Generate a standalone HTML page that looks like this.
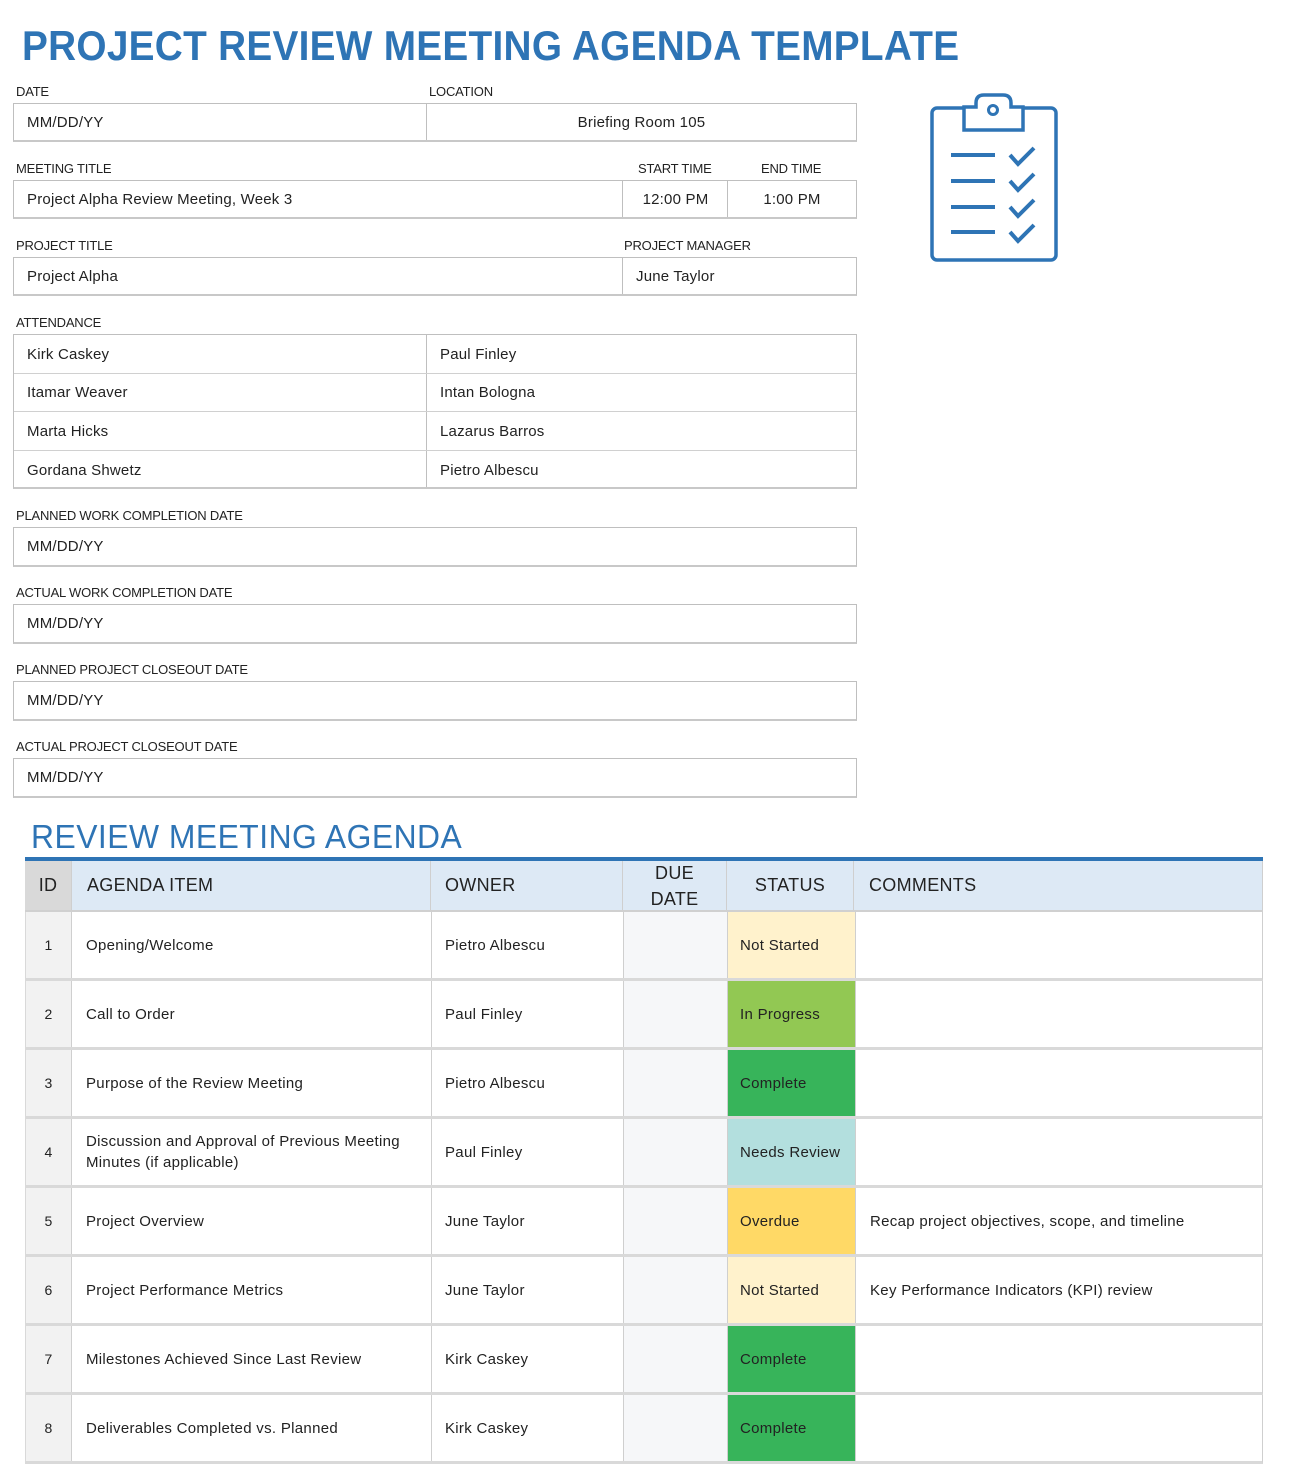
<!DOCTYPE html>
<html><head><meta charset="utf-8"><style>
*{margin:0;padding:0;box-sizing:border-box}
body{width:1300px;height:1477px;background:#fff;font-family:"Liberation Sans",sans-serif;color:#222;position:relative;overflow:hidden}
.a{position:absolute}
.lbl{position:absolute;font-size:13px;color:#222;letter-spacing:-0.2px}
.box{position:absolute;border:1px solid #bfbfbf;border-bottom:2px solid #c8c8c8;background:#fff}
.c{position:absolute;top:0;bottom:0;display:flex;align-items:center;font-size:15px;padding-left:13px;letter-spacing:0.2px}
.vl{position:absolute;top:0;bottom:0;width:1px;background:#bfbfbf}
.hl{position:absolute;left:0;right:0;height:1px;background:#d0d0d0}
.t{position:absolute;left:25px;width:1238px}
.cell{position:absolute;top:0;bottom:0;display:flex;align-items:center;font-size:15px;letter-spacing:0.3px;border-right:1px solid #cfcfcf}
</style></head><body>
<div class="a" style="left:22px;top:22px;font-size:42px;font-weight:bold;color:#2e74b5;letter-spacing:0.3px;transform:scaleX(0.923);transform-origin:left">PROJECT REVIEW MEETING AGENDA TEMPLATE</div>

<div class="lbl" style="left:16px;top:84px">DATE</div>
<div class="lbl" style="left:429px;top:84px">LOCATION</div>
<div class="box" style="left:13px;top:103px;width:844px;height:39px">
 <div class="c" style="left:0">MM/DD/YY</div>
 <div class="vl" style="left:412px"></div>
 <div class="c" style="left:413px;right:0;justify-content:center;padding-left:0">Briefing Room 105</div>
</div>

<div class="lbl" style="left:16px;top:161px">MEETING TITLE</div>
<div class="lbl" style="left:638px;top:161px">START TIME</div>
<div class="lbl" style="left:761px;top:161px">END TIME</div>
<div class="box" style="left:13px;top:180px;width:844px;height:39px">
 <div class="c" style="left:0">Project Alpha Review Meeting, Week 3</div>
 <div class="vl" style="left:608px"></div>
 <div class="c" style="left:609px;width:105px;justify-content:center;padding-left:0">12:00 PM</div>
 <div class="vl" style="left:713px"></div>
 <div class="c" style="left:714px;right:0;justify-content:center;padding-left:0">1:00 PM</div>
</div>

<div class="lbl" style="left:16px;top:238px">PROJECT TITLE</div>
<div class="lbl" style="left:624px;top:238px">PROJECT MANAGER</div>
<div class="box" style="left:13px;top:257px;width:844px;height:39px">
 <div class="c" style="left:0">Project Alpha</div>
 <div class="vl" style="left:608px"></div>
 <div class="c" style="left:609px">June Taylor</div>
</div>

<div class="lbl" style="left:16px;top:315px">ATTENDANCE</div>
<div class="box" style="left:13px;top:334px;width:844px;height:155px">
 <div class="vl" style="left:412px"></div>
 <div class="hl" style="top:38px"></div><div class="hl" style="top:76px"></div><div class="hl" style="top:115px"></div>
 <div class="c" style="left:0;top:0;bottom:auto;height:38px">Kirk Caskey</div>
 <div class="c" style="left:413px;top:0;bottom:auto;height:38px">Paul Finley</div>
 <div class="c" style="left:0;top:38px;bottom:auto;height:38px">Itamar Weaver</div>
 <div class="c" style="left:413px;top:38px;bottom:auto;height:38px">Intan Bologna</div>
 <div class="c" style="left:0;top:77px;bottom:auto;height:38px">Marta Hicks</div>
 <div class="c" style="left:413px;top:77px;bottom:auto;height:38px">Lazarus Barros</div>
 <div class="c" style="left:0;top:116px;bottom:auto;height:38px">Gordana Shwetz</div>
 <div class="c" style="left:413px;top:116px;bottom:auto;height:38px">Pietro Albescu</div>
</div>

<div class="lbl" style="left:16px;top:508px">PLANNED WORK COMPLETION DATE</div>
<div class="box" style="left:13px;top:527px;width:844px;height:40px"><div class="c" style="left:0">MM/DD/YY</div></div>
<div class="lbl" style="left:16px;top:585px">ACTUAL WORK COMPLETION DATE</div>
<div class="box" style="left:13px;top:604px;width:844px;height:40px"><div class="c" style="left:0">MM/DD/YY</div></div>
<div class="lbl" style="left:16px;top:662px">PLANNED PROJECT CLOSEOUT DATE</div>
<div class="box" style="left:13px;top:681px;width:844px;height:40px"><div class="c" style="left:0">MM/DD/YY</div></div>
<div class="lbl" style="left:16px;top:739px">ACTUAL PROJECT CLOSEOUT DATE</div>
<div class="box" style="left:13px;top:758px;width:844px;height:40px"><div class="c" style="left:0">MM/DD/YY</div></div>

<svg class="a" style="left:925px;top:88px" width="140" height="180" viewBox="925 88 140 180" fill="none" stroke="#2e74b5" stroke-width="3.5">
 <rect x="932" y="108" width="124" height="152" rx="5"/>
 <path d="M964 130 V107 H976 V103 Q976 95 984 95 H1003 Q1011 95 1011 103 V107 H1023 V130 Z" fill="#fff"/>
 <circle cx="993" cy="110" r="4.5" stroke-width="3"/>
 <path d="M951 155 H995 M951 181 H995 M951 207 H995 M951 232 H995" stroke-width="4"/>
 <path d="M1010 155 L1018 164 L1034 148 M1010 181 L1018 190 L1034 174 M1010 207 L1018 216 L1034 200 M1010 232 L1018 241 L1034 225" stroke-width="4"/>
</svg>

<div class="a" style="left:31px;top:818px;font-size:33px;color:#2e74b5;letter-spacing:0.5px;transform:scaleX(0.965);transform-origin:left">REVIEW MEETING AGENDA</div>
<div class="t" style="top:857px;height:4px;background:#2e74b5"></div>

<div class="t" style="top:861px;height:51px;background:#dde9f5;border-bottom:2px solid #d0d0d0;border-right:1px solid #cfcfcf">
 <div class="cell" style="left:0;width:47px;background:#d9d9d9;justify-content:center;font-size:18px">ID</div>
 <div class="cell" style="left:47px;width:359px;padding-left:15px;font-size:18px">AGENDA ITEM</div>
 <div class="cell" style="left:406px;width:192px;padding-left:14px;font-size:18px">OWNER</div>
 <div class="cell" style="left:598px;width:104px;justify-content:center;text-align:center;font-size:18px;line-height:26px">DUE<br>DATE</div>
 <div class="cell" style="left:702px;width:127px;justify-content:center;font-size:18px">STATUS</div>
 <div class="cell" style="left:829px;width:409px;padding-left:15px;font-size:18px;border-right:none">COMMENTS</div>
</div>

<div id="rows"></div>
<script>
var rows=[["1","Opening/Welcome","Pietro Albescu","Not Started","#fff2cc",""],
["2","Call to Order","Paul Finley","In Progress","#92c853",""],
["3","Purpose of the Review Meeting","Pietro Albescu","Complete","#37b45a",""],
["4","Discussion and Approval of Previous Meeting<br>Minutes (if applicable)","Paul Finley","Needs Review","#b3dfde",""],
["5","Project Overview","June Taylor","Overdue","#ffd966","Recap project objectives, scope, and timeline"],
["6","Project Performance Metrics","June Taylor","Not Started","#fff2cc","Key Performance Indicators (KPI) review"],
["7","Milestones Achieved Since Last Review","Kirk Caskey","Complete","#37b45a",""],
["8","Deliverables Completed vs. Planned","Kirk Caskey","Complete","#37b45a",""]];
var h="";
rows.forEach(function(r,i){var top=912+i*69;
h+='<div class="t" style="top:'+top+'px;height:69px;border-bottom:3px solid #d9d9d9;border-right:1px solid #cfcfcf;border-left:1px solid #d9d9d9">'+
'<div class="cell" style="left:0;width:46px;background:#f2f2f2;justify-content:center;font-size:14px">'+r[0]+'</div>'+
'<div class="cell" style="left:46px;width:360px;padding-left:14px;line-height:21px">'+r[1]+'</div>'+
'<div class="cell" style="left:406px;width:192px;padding-left:13px">'+r[2]+'</div>'+
'<div class="cell" style="left:598px;width:104px;background:#f6f7f9"></div>'+
'<div class="cell" style="left:702px;width:127px;padding-left:12px;background:'+r[4]+';border-right:none">'+r[3]+'</div>'+
'<div class="cell" style="left:829px;width:408px;padding-left:14px;border-right:none;border-left:1px solid #cfcfcf">'+r[5]+'</div></div>';});
document.getElementById("rows").innerHTML=h;
</script>
</body></html>
